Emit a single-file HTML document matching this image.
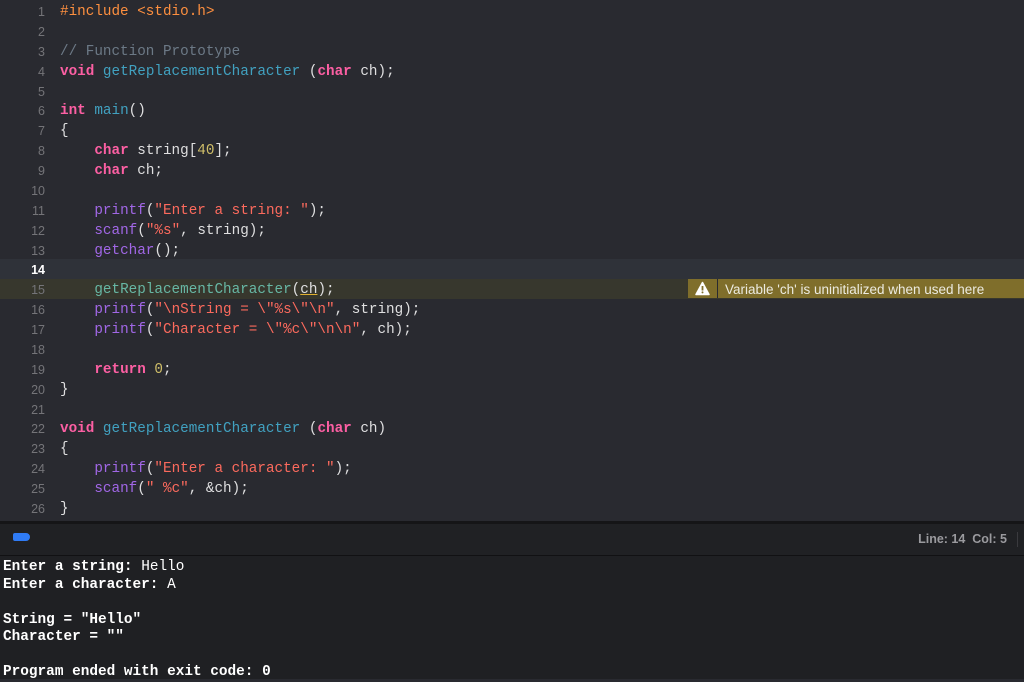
<!DOCTYPE html>
<html><head><meta charset="utf-8"><style>
html,body{margin:0;padding:0;width:1024px;height:679px;overflow:hidden;background:#292a30;}
.ed{position:absolute;left:0;top:1px;width:1024px;}
.l{position:relative;height:19.88px;line-height:19.88px;font-family:"Liberation Mono",monospace;font-size:14.3px;color:#dfdfe0;white-space:pre;}
.l>span{position:absolute;top:2px;}
.n{left:0;width:45px;text-align:right;color:#747478;font-size:12.5px;font-family:"Liberation Sans",sans-serif;}
.c{left:60px;}
.k{color:#fc5fa3;font-weight:bold}.s{color:#fc6a5d}.cm{color:#6c7986}.p{color:#fd8f3f}.nu{color:#d0bf69}
.d{color:#41a1c0}.f{color:#a167e6}.g{color:#67b7a4}
.cur{background:#2f3239}.cur .n{color:#fff;font-weight:bold}
.warn{background:#37372d}
.badge{position:absolute;left:688px;top:0;height:19px;width:336px;background:#7f6e2b;font-family:"Liberation Sans",sans-serif;font-size:13.5px;color:#ecebe0;}
.badge .ic{position:absolute;left:0;top:0;width:29px;height:19px;border-right:1px solid #292a30;}
.badge .t{position:absolute;left:37px;top:1px;line-height:19px;}
.sep{position:absolute;left:0;top:521px;width:1024px;height:3px;background:#151517;}
.bar{position:absolute;left:0;top:524px;width:1024px;height:31px;background:#202124;border-bottom:1px solid #111113;}
.pill{position:absolute;left:13px;top:9px;width:17px;height:8px;background:#2f7bf5;border-radius:2px 4px 4px 2px;}
.lc{position:absolute;right:17px;top:0;line-height:31px;font-family:"Liberation Sans",sans-serif;font-size:12.5px;color:#9a9a9e;font-weight:bold;}
.vl{position:absolute;right:6px;top:8px;width:1px;height:15px;background:#3a3a3e;}
.con{position:absolute;left:0;top:556px;width:1024px;height:123px;background:#1f2023;padding:0;}
.con pre{margin:0;position:absolute;left:3px;top:3px;font-family:"Liberation Mono",monospace;font-size:14.4px;line-height:17.5px;color:#fff;font-weight:bold;}
.con .r{font-weight:normal}
</style></head><body>
<div class="ed">
<div class="l"><span class="n">1</span><span class="c"><span class="p">#include &lt;stdio.h&gt;</span></span></div>
<div class="l"><span class="n">2</span></div>
<div class="l"><span class="n">3</span><span class="c"><span class="cm">// Function Prototype</span></span></div>
<div class="l"><span class="n">4</span><span class="c"><span class="k">void</span> <span class="d">getReplacementCharacter</span> (<span class="k">char</span> ch);</span></div>
<div class="l"><span class="n">5</span></div>
<div class="l"><span class="n">6</span><span class="c"><span class="k">int</span> <span class="d">main</span>()</span></div>
<div class="l"><span class="n">7</span><span class="c">{</span></div>
<div class="l"><span class="n">8</span><span class="c">    <span class="k">char</span> string[<span class="nu">40</span>];</span></div>
<div class="l"><span class="n">9</span><span class="c">    <span class="k">char</span> ch;</span></div>
<div class="l"><span class="n">10</span></div>
<div class="l"><span class="n">11</span><span class="c">    <span class="f">printf</span>(<span class="s">"Enter a string: "</span>);</span></div>
<div class="l"><span class="n">12</span><span class="c">    <span class="f">scanf</span>(<span class="s">"%s"</span>, string);</span></div>
<div class="l"><span class="n">13</span><span class="c">    <span class="f">getchar</span>();</span></div>
<div class="l cur"><span class="n">14</span></div>
<div class="l warn"><span class="n">15</span><span class="c">    <span class="g">getReplacementCharacter</span>(<span style="text-decoration:underline;text-decoration-color:#e0b030">ch</span>);</span><div class="badge"><div class="ic"><svg width="29" height="19"><path d="M14.5 3.5 L21 15.5 L8 15.5 Z" fill="#fff" stroke="#fff" stroke-linejoin="round" stroke-width="1.5"/><path d="M14.5 7v4.5" stroke="#7f6e2b" stroke-width="1.8"/><circle cx="14.5" cy="13.4" r="1" fill="#7f6e2b"/></svg></div><span class="t">Variable 'ch' is uninitialized when used here</span></div></div>
<div class="l"><span class="n">16</span><span class="c">    <span class="f">printf</span>(<span class="s">"\nString = \"%s\"\n"</span>, string);</span></div>
<div class="l"><span class="n">17</span><span class="c">    <span class="f">printf</span>(<span class="s">"Character = \"%c\"\n\n"</span>, ch);</span></div>
<div class="l"><span class="n">18</span></div>
<div class="l"><span class="n">19</span><span class="c">    <span class="k">return</span> <span class="nu">0</span>;</span></div>
<div class="l"><span class="n">20</span><span class="c">}</span></div>
<div class="l"><span class="n">21</span></div>
<div class="l"><span class="n">22</span><span class="c"><span class="k">void</span> <span class="d">getReplacementCharacter</span> (<span class="k">char</span> ch)</span></div>
<div class="l"><span class="n">23</span><span class="c">{</span></div>
<div class="l"><span class="n">24</span><span class="c">    <span class="f">printf</span>(<span class="s">"Enter a character: "</span>);</span></div>
<div class="l"><span class="n">25</span><span class="c">    <span class="f">scanf</span>(<span class="s">" %c"</span>, &amp;ch);</span></div>
<div class="l"><span class="n">26</span><span class="c">}</span></div>
</div>
<div class="sep"></div>
<div class="bar"><div class="pill"></div><div class="lc">Line: 14&nbsp; Col: 5</div><div class="vl"></div></div>
<div class="con"><pre>Enter a string: <span class="r">Hello</span>
Enter a character: <span class="r">A</span>

String = "Hello"
Character = ""

Program ended with exit code: 0</pre></div>
</body></html>
